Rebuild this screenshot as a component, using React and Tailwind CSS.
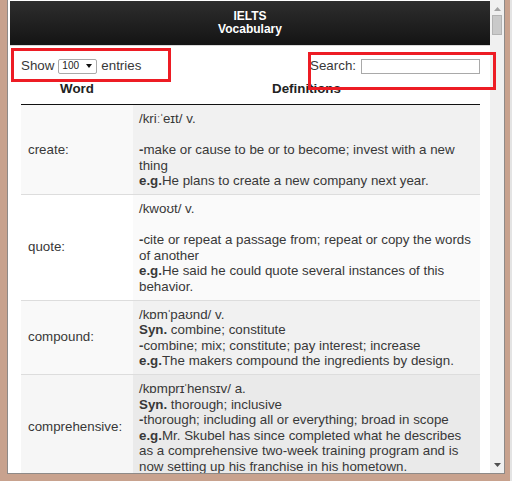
import React from "react";

const S = () => <span className="inline-block -mx-[1px]">ˈ</span>;

const rows = [
  {
    word: "create:",
    tone: "odd",
    lines: [
      <>/kriː<S />eɪt/ v.</>,
      <>&nbsp;</>,
      <><b>-</b>make or cause to be or to become; invest with a new thing</>,
      <><b>e.g.</b>He plans to create a new company next year.</>,
    ],
  },
  {
    word: "quote:",
    tone: "even",
    lines: [
      <>/kwoʊt/ v.</>,
      <>&nbsp;</>,
      <><b>-</b>cite or repeat a passage from; repeat or copy the words of another</>,
      <><b>e.g.</b>He said he could quote several instances of this behavior.</>,
    ],
  },
  {
    word: "compound:",
    tone: "odd",
    lines: [
      <>/kɒm<S />paʊnd/ v.</>,
      <><b>Syn.</b> combine; constitute</>,
      <><b>-</b>combine; mix; constitute; pay interest; increase</>,
      <><b>e.g.</b>The makers compound the ingredients by design.</>,
    ],
  },
  {
    word: "comprehensive:",
    tone: "hover",
    lines: [
      <>/kɒmprɪ<S />hensɪv/ a.</>,
      <><b>Syn.</b> thorough; inclusive</>,
      <><b>-</b>thorough; including all or everything; broad in scope</>,
      <><b>e.g.</b>Mr. Skubel has since completed what he describes as a comprehensive two-week training program and is now setting up his franchise in his hometown.</>,
    ],
  },
];

const wordBg = { odd: "bg-[#f9f9f9]", even: "bg-white", hover: "bg-[#f6f6f6]" };
const defBg = { odd: "bg-[#f1f1f1]", even: "bg-[#fafafa]", hover: "bg-[#eaeaea]" };

export default function App() {
  return (
    <div className="relative w-[512px] h-[481px] overflow-hidden bg-[#c8a28e] flex font-['Liberation_Sans',Arial,'DejaVu_Sans',sans-serif] text-[#383838]">
      <div className="w-[7px] shrink-0" />
      <div className="w-[498px] h-[474px] shrink-0 border-l border-r border-b border-[#8e8a88] bg-white flex">
        {/* main scroll area */}
        <div className="w-[482px] h-full overflow-hidden bg-white">
          <div className="ml-[2px] mt-[1px] w-[480px] h-[45px] border-b border-[#d8d8d8] bg-gradient-to-b from-[#2e2e2e] to-[#141414] flex flex-col items-center justify-center text-white font-bold text-[12px] leading-[13px]">
            <div>IELTS</div>
            <div>Vocabulary</div>
          </div>
          <div className="pl-[13px] pr-[10px]">
            <div className="h-[31px] pt-[12px] flex justify-between items-start text-[13.33px]">
              <div className="flex items-center h-[16px] gap-[4px] leading-[15.6px]">
                <span>Show</span>
                <div className="w-[39px] h-[15px] border border-[#a9a9a9] rounded-[2px] bg-white flex items-center justify-between pl-[3px] pr-[4px] text-[10px] leading-[12px] text-[#222]">
                  <span>100</span>
                  <svg width="6" height="4" viewBox="0 0 6 4"><path d="M0 0H6L3 4Z" fill="#111" /></svg>
                </div>
                <span>entries</span>
              </div>
              <div className="flex items-center h-[16px] gap-[5px] leading-[15.6px]">
                <span>Search:</span>
                <div className="w-[119px] h-[15px] border border-[#a9a9a9] bg-white" />
              </div>
            </div>
            <div className="grid grid-cols-[112px_347px] h-[28px] border-b border-[#111] font-bold text-[13.33px] leading-[15.6px] text-[#222]">
              <div className="pt-[4px] text-center">Word</div>
              <div className="pt-[4px] text-center">Definitions</div>
            </div>
            {rows.map((r, i) => (
              <div
                key={r.word}
                className={`grid grid-cols-[112px_347px] text-[13.33px] leading-[15.6px] ${i > 0 ? "border-t border-[#ddd]" : ""}`}
              >
                <div className={`${wordBg[r.tone]} pl-[7px] flex items-center`}>{r.word}</div>
                <div className={`${defBg[r.tone]} pl-[6px] pr-[7px] pt-[6px] pb-[5px]`}>
                  {r.lines.map((l, j) => (
                    <div key={j}>{l}</div>
                  ))}
                </div>
              </div>
            ))}
          </div>
        </div>
        {/* scrollbar */}
        <div className="w-[14px] h-full bg-[#f0f0f0] flex flex-col items-center">
          <svg className="mt-[7px]" width="7" height="4" viewBox="0 0 7 4"><path d="M3.5 0L7 4H0Z" fill="#a3a3a3" /></svg>
          <div className="mt-[4px] w-[10px] h-[20px] bg-[#c9c9c9] border border-[#b3b3b3]" />
          <div className="flex-1" />
          <svg className="mb-[6px]" width="7" height="4" viewBox="0 0 7 4"><path d="M0 0H7L3.5 4Z" fill="#505050" /></svg>
        </div>
      </div>
      <div className="w-[5px] shrink-0" />
      <div className="w-[2px] h-full bg-[#e4e4e4] shrink-0" />

      {/* red annotation boxes */}
      <div className="absolute left-[11px] top-[48px] w-[160px] h-[34px] border-[3px] border-[#ed1c24]" />
      <div className="absolute left-[308px] top-[52px] w-[188px] h-[38px] border-[3px] border-[#ed1c24]" />
    </div>
  );
}
